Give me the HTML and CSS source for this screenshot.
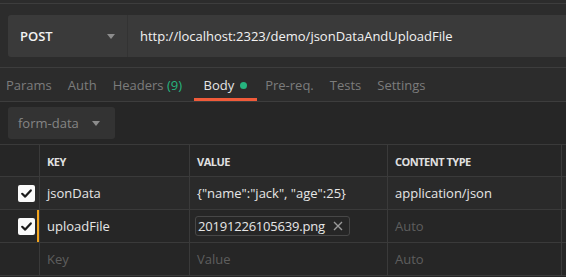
FILE: index.html
```html
<!DOCTYPE html>
<html>
<head>
<meta charset="utf-8">
<link rel="stylesheet" href="styles.css">
</head>
<body>
<div class="app">
  <div class="topbar"></div>
  <div class="request">
    <div class="reqbar">
      <div class="method">
        <span class="method-name">POST</span>
        <span class="caret"></span>
      </div>
      <div class="url">http://localhost:2323/demo/jsonDataAndUploadFile</div>
    </div>
  </div>
  <div class="tabs">
    <div class="tab">Params</div>
    <div class="tab">Auth</div>
    <div class="tab">Headers <span class="count">(9)</span></div>
    <div class="tab active">Body<span class="dot"></span></div>
    <div class="tab">Pre-req.</div>
    <div class="tab">Tests</div>
    <div class="tab">Settings</div>
  </div>
  <div class="body">
    <div class="mode-row">
      <div class="mode">
        <span>form-data</span>
        <span class="caret"></span>
      </div>
    </div>
    <div class="table">
      <div class="row head">
        <div class="cell chk"></div>
        <div class="cell key">KEY</div>
        <div class="cell val">VALUE</div>
        <div class="cell ct">CONTENT TYPE</div>
        <div class="cell end"></div>
      </div>
      <div class="row r1">
        <div class="cell chk"><span class="box"><svg viewBox="0 0 17 17" width="17" height="17"><path d="M4.2 8.8 L7.2 11.6 L12.8 5.4" fill="none" stroke="#1a1a1a" stroke-width="2.2" stroke-linecap="round" stroke-linejoin="round"/></svg></span></div>
        <div class="cell key">jsonData</div>
        <div class="cell val">{"name":"jack", "age":25}</div>
        <div class="cell ct">application/json</div>
        <div class="cell end"></div>
      </div>
      <div class="row r2">
        <div class="cell chk marked"><span class="box"><svg viewBox="0 0 17 17" width="17" height="17"><path d="M4.2 8.8 L7.2 11.6 L12.8 5.4" fill="none" stroke="#1a1a1a" stroke-width="2.2" stroke-linecap="round" stroke-linejoin="round"/></svg></span></div>
        <div class="cell key">uploadFile</div>
        <div class="cell val"><span class="chip">20191226105639.png<svg class="x" viewBox="0 0 10 10" width="10" height="10"><path d="M1 1 L9 9 M9 1 L1 9" stroke="#9a9a9a" stroke-width="1.4"/></svg></span></div>
        <div class="cell ct muted">Auto</div>
        <div class="cell end"></div>
      </div>
      <div class="row r3">
        <div class="cell chk"></div>
        <div class="cell key muted">Key</div>
        <div class="cell val muted">Value</div>
        <div class="cell ct muted">Auto</div>
        <div class="cell end"></div>
      </div>
    </div>
  </div>
</div>
</body>
</html>
```

FILE: styles.css
```css
html, body {
  margin: 0;
  padding: 0;
  background: #262626;
  width: 566px;
  height: 277px;
  overflow: hidden;
}
.app {
  font-family: "Open Sans", "Liberation Sans", sans-serif;
  color: #e6e6e6;
  font-size: 13px;
}
.topbar {
  height: 3px;
  background: #2c2c2c;
  border-bottom: 1px solid #3d3d3d;
}
.request {
  background: #2c2c2c;
  padding: 11px 0 10px 8px;
  border-bottom: 1px solid #3d3d3d;
}
.reqbar {
  display: flex;
  height: 42px;
  background: #3a3a3a;
  border-radius: 3px 0 0 3px;
}
.method {
  width: 120px;
  display: flex;
  align-items: center;
  justify-content: space-between;
  padding: 0 12px 0 12px;
  box-sizing: border-box;
  border-right: 1px solid #333;
}
.method-name {
  font-weight: 600;
  color: #f2f2f2;
  font-size: 13px;
}
.caret {
  width: 0;
  height: 0;
  border-left: 4px solid transparent;
  border-right: 4px solid transparent;
  border-top: 5px solid #8c8c8c;
}
.url {
  display: flex;
  align-items: center;
  padding-left: 12px;
  color: #f2f2f2;
}
.tabs {
  display: flex;
  height: 33px;
  background: #2c2c2c;
  border-bottom: 1px solid #3d3d3d;
  margin-left: -2px;
}
.tab {
  padding: 0 8px;
  display: flex;
  align-items: center;
  color: #7c7c7c;
  box-sizing: border-box;
  border-bottom: 3px solid transparent;
  padding-top: 3px;
  white-space: pre;
}
.tab.active {
  color: #e6e6e6;
  border-bottom-color: #f15b3a;
  margin-left: 4.5px;
  padding-left: 9px;
  padding-right: 10px;
}
.count {
  color: #26b47f;
}
.dot {
  display: inline-block;
  width: 7px;
  height: 7px;
  border-radius: 50%;
  background: #26b47f;
  margin-left: 6px;
  margin-top: 1px;
}
.body {
  background: #262626;
}
.mode-row {
  padding: 5px 0 5px 8px;
}
.mode {
  width: 107px;
  height: 32px;
  background: #333333;
  border-radius: 3px;
  display: flex;
  align-items: center;
  padding: 0 15px 0 10px;
  box-sizing: border-box;
  justify-content: space-between;
  color: #858585;
}
.table {
  border-top: 1px solid #3a3a3a;
}
.row {
  display: flex;
  height: 32px;
  border-bottom: 1px solid #3a3a3a;
}
.row.head {
  height: 31px;
}
.cell {
  display: flex;
  align-items: center;
  box-sizing: border-box;
  border-right: 1px solid #3a3a3a;
  padding-left: 7px;
  white-space: nowrap;
  overflow: hidden;
}
.chk { width: 40px; padding-left: 0; justify-content: flex-end; padding-right: 4px; position: relative; }
.key { width: 150px; }
.val { width: 198px; }
.ct { width: 174px; }
.end { width: 4px; padding: 0; border-right: none; }
.head .cell {
  font-size: 11px;
  font-weight: 700;
  letter-spacing: -0.5px;
  color: #e0e0e0;
  padding-top: 1px;
}
.r1 { background: #2a2a2a; }
.box {
  width: 17px;
  height: 17px;
  background: #fafafa;
  border-radius: 2px;
  display: block;
}
.box svg { display: block; }
.marked::after {
  content: "";
  position: absolute;
  right: -1px;
  top: 0;
  bottom: 0;
  width: 3px;
  background: #f2a41d;
}
.muted { color: #5e5e5e; }
.chip {
  display: inline-flex;
  align-items: center;
  height: 20px;
  border: 1px solid #474747;
  border-radius: 3px;
  padding: 0 6px 0 2px;
  box-sizing: border-box;
  margin-left: -2px;
  color: #e6e6e6;
  letter-spacing: -0.2px;
}
.chip .x { margin-left: 8px; }
```
